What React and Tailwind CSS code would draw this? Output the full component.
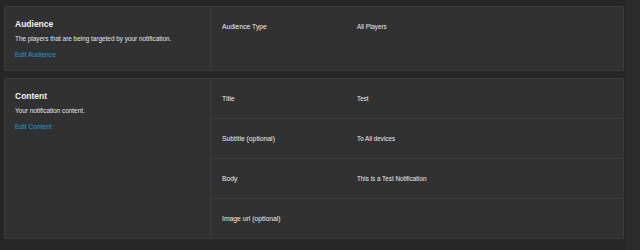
import React from 'react';

const sections = [
    {
        title: 'Audience',
        description: 'The players that are being targeted by your notification.',
        action: 'Edit Audience',
        rows: [{ label: 'Audience Type', value: 'All Players' }]
    },
    {
        title: 'Content',
        description: 'Your notification content.',
        action: 'Edit Content',
        rows: [
            { label: 'Title', value: 'Test' },
            { label: 'Subtitle (optional)', value: 'To All devices' },
            { label: 'Body', value: 'This is a Test Notification' },
            { label: 'Image url (optional)', value: '' }
        ]
    }
];

const SummaryCard = ({ section }) => (
    <div className="flex bg-[#313131] border border-[#3b3b3b] rounded-[1px]">
        <div className="w-[206px] shrink-0 border-r border-[#3b3b3b] pt-[11px] pb-[10px] px-[10px]">
            <h2 className="text-[8.5px] leading-[12px] font-bold text-[#f2f2f2]">{section.title}</h2>
            <p className="mt-[4px] text-[6.4px] leading-[10px] text-[#e6e6e6]">{section.description}</p>
            <a href="#" className="block mt-[6px] text-[6.7px] leading-[10px] text-[#1e9bd7]">{section.action}</a>
        </div>
        <div className="flex-1 flex flex-col">
            {section.rows.map((row, i) => {
                const last = i === section.rows.length - 1;
                return (
                    <div
                        key={row.label}
                        className={last ? 'flex items-center h-[39px] px-[11px]' : 'flex items-center h-[40px] px-[11px] border-b border-[#3b3b3b]'}
                    >
                        <div className="flex items-baseline leading-[10px]">
                            <span className="w-[135px] text-[6.8px] text-[#ececec]">{row.label}</span>
                            <span className="text-[6.3px] text-[#ececec]">{row.value}</span>
                        </div>
                    </div>
                );
            })}
        </div>
    </div>
);

export default function App() {
    return (
        <div className="flex w-[640px] h-[250px] bg-[#262626] font-['Liberation_Sans',Arial,sans-serif]">
            <div className="flex-1 flex flex-col gap-[7px] pt-[6px] pl-[4px] pr-[2px]">
                {sections.map(section => (
                    <SummaryCard key={section.title} section={section} />
                ))}
            </div>
            <div className="w-[14px] bg-[#2b2b2b]" />
        </div>
    );
}
